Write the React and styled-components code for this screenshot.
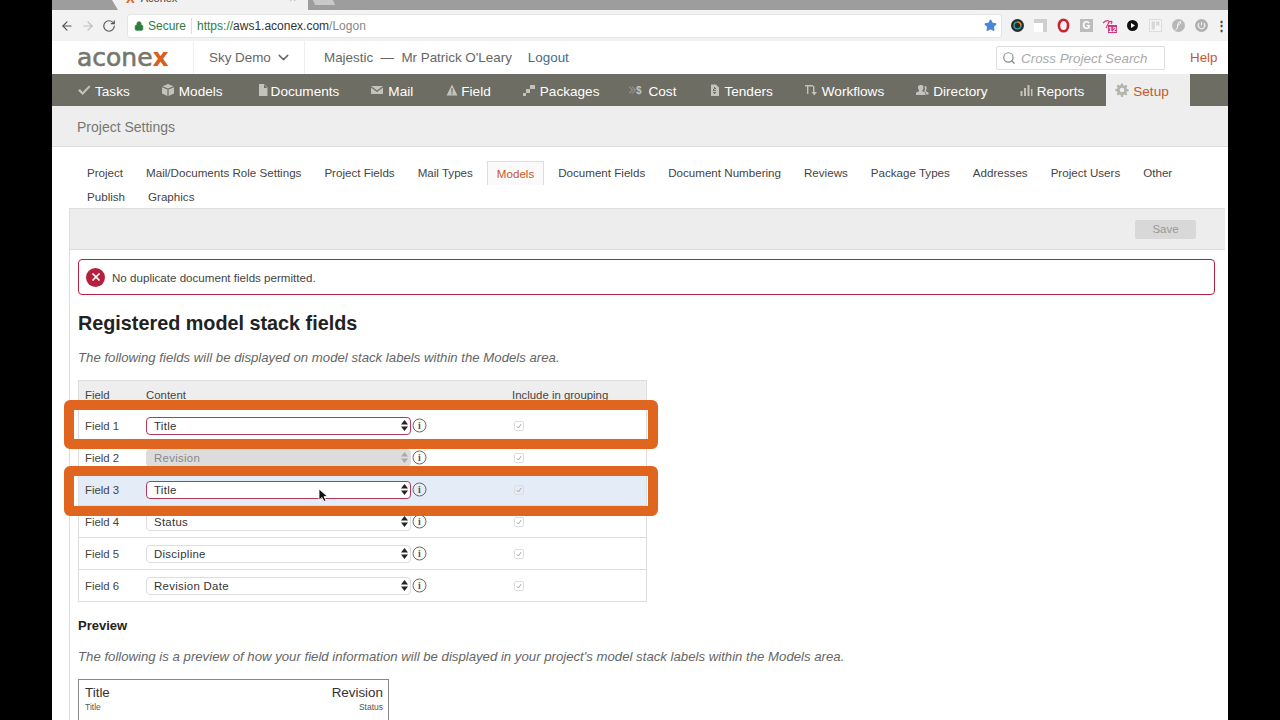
import React from 'react';
import styled, { createGlobalStyle } from 'styled-components';
import { ArrowLeft, ArrowRight, RotateCw, Lock, Star, ChevronDown, Search, X } from 'lucide-react';

const Global = createGlobalStyle`
  html, body { margin: 0; padding: 0; background: #000; }
  body { font-family: "Liberation Sans", Arial, sans-serif; overflow: hidden; }
`;

const Screen = styled.div`
  position: relative; width: 1176px; height: 720px; margin: 0 52px; background: #fff; overflow: hidden;
`;
const TabStrip = styled.div`
  height: 10px; background: #9d9d9d; position: relative;
`;
const BrowserTab = styled.div`
  position: absolute; left: 60px; top: 0; width: 196px; height: 10px; background: #f1f1f1; overflow: hidden;
  clip-path: polygon(0 0, 100% 0, 100% 100%, 6px 100%); font-size: 11px; color: #444;
  display: flex; justify-content: space-between; padding: 0 12px 0 14px; box-sizing: border-box;
`;
const TabLabel = styled.span`
  display: flex; gap: 6px; margin-top: -8px; line-height: 13px;
  b { color: #d8601c; font-size: 13px; }
`;
const TabClose = styled.span` margin-top: -8px; color: #777; line-height: 13px; `;
const NewTab = styled.div`
  position: absolute; left: 262px; top: 0; width: 20px; height: 5px; background: #c9c9c9; transform: skewX(25deg);
`;
const Toolbar = styled.div`
  height: 31px; background: #f2f2f2; display: flex; align-items: center; padding-left: 8px; color: #555;
`;
const NavIcons = styled.div`
  display: flex; gap: 7px; align-items: center; width: 67px; flex: none;
  svg { width: 14px; height: 14px; }
`;
const Omnibox = styled.div`
  width: 875px; height: 24px; background: #fff; border: 1px solid #e4e4e4; border-radius: 3px; flex: none;
  display: flex; align-items: center; box-sizing: border-box; padding: 0 4px 0 6px; font-size: 12px;
`;
const Secure = styled.span`
  color: #2f7d3c; display: flex; gap: 4px; align-items: center; padding-right: 5px; border-right: 1px solid #ddd; height: 16px; margin-right: 5px;
`;
const UrlGreen = styled.span` color: #2f7d3c; `;
const UrlDark = styled.span` color: #333; `;
const UrlGrey = styled.span` color: #888; `;
const UrlFill = styled.span` flex: 1; `;
const Extensions = styled.div`
  display: flex; align-items: center; gap: 8px; padding-left: 8px;
`;
const ExtSvg = styled.svg` width: 15px; height: 15px; flex: none; display: block; `;
const Dots = styled.span` color: #444; font-size: 13px; font-weight: 700; line-height: 13px; margin-left: -2px; `;

const Header = styled.div`
  height: 33px; background: #fff; display: flex; align-items: stretch; font-size: 13.4px; color: #666;
`;
const Logo = styled.div`
  width: 141px; flex: none; box-sizing: border-box; padding-left: 25px; color: #77766d; line-height: 33px;
  font-family: "DejaVu Sans", sans-serif; font-size: 25px; -webkit-text-stroke: .6px #77766d;
  span { color: #d8601c; font-weight: 700; -webkit-text-stroke: 0; }
`;
const Crumb = styled.div`
  display: flex; align-items: center; gap: 4px; border-left: 1px solid #eee; border-right: 1px solid #eee; width: 112px; flex: none;
  box-sizing: border-box; padding-left: 15px;
`;
const UserInfo = styled.div`
  display: flex; align-items: center; padding-left: 19px; width: 691px; box-sizing: border-box; flex: none; white-space: pre;
`;
const LogoutLink = styled.a` color: #3d6c92; margin-left: 16px; `;
const SearchBox = styled.div`
  width: 169px; height: 24px; margin-top: 5px; border: 1px solid #ddd; border-radius: 2px; box-sizing: border-box; display: flex; align-items: center;
  gap: 5px; padding-left: 5px; color: #aaa; font-style: italic; font-size: 13.4px; flex: none;
  svg { color: #888; }
`;
const Help = styled.a` color: #c8572a; margin-left: 25px; line-height: 33px; `;

const MainNav = styled.div`
  height: 32px; background: #6e6d63; display: flex; align-items: stretch; padding-left: 25px; font-size: 13.6px; color: #fff; box-sizing: border-box;
`;
const NavItem = styled.div`
  display: flex; align-items: center; gap: ${p => p.$gap}px; margin-right: ${p => p.$mr}px; white-space: nowrap; padding-top: 2px;
  svg { margin-top: -3px; }
`;
const NavGlyph = styled.svg`
  width: 14px; height: 14px; flex: none; fill: #c4c3bb; stroke: none;
`;
const SetupItem = styled.div`
  display: flex; align-items: center; gap: 4px; width: 84px; box-sizing: border-box; padding: 2px 0 0 9px; background: #eee; color: #c8572a;
  svg { fill: #b5b5b0; margin-top: -3px; }
`;
const SubHeader = styled.div`
  height: 40px; background: #eeeeee; border-bottom: 1px solid #ddd; font-size: 14px; color: #77776f; line-height: 42px; padding-left: 25px;
`;
const Tabs = styled.div`
  height: 61px; box-sizing: border-box; padding: 14px 0 0 35px; display: flex; flex-wrap: wrap; align-content: flex-start; font-size: 11.6px; color: #444;
`;
const TabItem = styled.div`
  height: 24px; line-height: 24px; padding: 0 ${p => p.$active ? '9px' : '0'}; margin-right: ${p => p.$active ? '14px' : '23px'}; margin-left: ${p => p.$active ? '-9px' : '0'};
  color: ${p => p.$active ? '#c8572a' : '#444'}; white-space: nowrap; box-sizing: border-box;
  ${p => p.$active ? 'border: 1px solid #ddd; border-bottom: none; background: #fafafa; line-height: 23px;' : ''}
`;
const Panel = styled.div`
  margin: 0 3px 0 17px; border-left: 1px solid #ddd; border-top: 1px solid #ddd;
`;
const SaveBar = styled.div`
  height: 41px; box-sizing: border-box; background: #ededed; border-bottom: 1px solid #ddd; display: flex; justify-content: flex-end; align-items: center; padding-right: 29px;
`;
const SaveBtn = styled.div`
  width: 61px; height: 19px; background: #d8d8d8; border-radius: 2px; color: #999; font-size: 11.5px; text-align: center; line-height: 19px;
`;
const PanelBody = styled.div` padding: 9px 10px 0 8px; `;
const ErrorBox = styled.div`
  height: 36px; border: 1px solid #b3213f; border-radius: 4px; display: flex; align-items: center; box-sizing: border-box; padding-left: 7px; gap: 7px;
  font-size: 11.6px; color: #444;
`;
const ErrorIcon = styled.span`
  width: 19px; height: 19px; border-radius: 50%; background: #b3213f; color: #fff; display: flex; align-items: center; justify-content: center;
`;
const Title = styled.h1`
  font-size: 19.8px; font-weight: 700; color: #222; margin: 16px 0 0; line-height: 24px;
`;
const Intro = styled.p`
  font-size: 13.2px; font-style: italic; color: #666; margin: ${p => p.$mt}px 0 0; line-height: 16px;
`;
const Table = styled.div`
  margin-top: 14px; width: 569px; border: 1px solid #ddd; box-sizing: border-box;
`;
const THead = styled.div`
  height: 28px; background: #eee; display: grid; grid-template-columns: 61px 366px 1fr; font-size: 11.4px; color: #444; line-height: 28px; padding-left: 6px;
`;
const Row = styled.div`
  height: 32px; display: grid; grid-template-columns: 61px 266px 102px 1fr; align-items: center; padding-left: 6px; font-size: 11.4px; color: #444;
  border-top: 1px solid #ddd; box-sizing: border-box; background: ${p => p.$hl ? '#e3ecf7' : '#fff'};
`;
const Select = styled.div`
  width: 265px; height: 18px; box-sizing: border-box; border: 1px solid ${p => p.$err ? '#b3395a' : '#ddd'}; border-radius: 4px;
  background: ${p => p.$off ? '#dcdcdc' : '#fff'}; color: ${p => p.$off ? '#888' : '#333'}; font-size: 11.4px; letter-spacing: .3px; line-height: 16px; padding: 0 2px 0 7px;
  display: flex; justify-content: space-between; align-items: center;
`;
const Arrows = styled.svg`
  width: 7px; height: 11px; fill: ${p => p.$off ? '#aaa' : '#222'};
`;
const InfoIcon = styled.svg`
  width: 15px; height: 15px; display: block; stroke: #666; fill: none;
`;
const InfoGlyph = styled.text`
  font-family: "Liberation Serif", serif; font-size: 10px; fill: #555; stroke: none; font-weight: 700;
`;
const CheckBox = styled.svg`
  width: 10px; height: 10px; display: block; fill: none;
`;
const PreviewTitle = styled.h2`
  font-size: 13px; font-weight: 700; color: #222; margin: 16px 0 0; line-height: 16px;
`;
const Card = styled.div`
  margin-top: 14px; width: 311px; height: 60px; border: 1px solid #888; box-sizing: border-box; padding: 5px 5px 0 6px; display: grid;
  grid-template-columns: 1fr 1fr; color: #333; align-content: start;
`;
const CardBig = styled.div` font-size: 13.4px; line-height: 15px; text-align: ${p => p.$r ? 'right' : 'left'}; `;
const CardSmall = styled.div` font-size: 8.5px; line-height: 11px; margin-top: 2px; color: #555; text-align: ${p => p.$r ? 'right' : 'left'}; `;
const Highlight = styled.div`
  position: absolute; left: 12px; width: 594px; top: ${p => p.$top}px; height: ${p => p.$h}px; border: 10px solid #e0651f;
  box-sizing: border-box; border-radius: 6px; pointer-events: none;
`;
const Cursor = styled.svg`
  position: absolute; left: 266px; top: 488px;
`;

const icons = {
  Tasks: <path d="M1 7.5 3 6l2.6 3L12 2.5l1.5 1.2L5.7 12z" />,
  Models: <path d="M7 1 1.5 3.2 7 5.4l5.5-2.2zM1 4.2v6.4L6.4 13V6.4zM13 4.2v6.4L7.6 13V6.4z" />,
  Documents: <path d="M3 1h5l3.5 3.5V13H3zM8 1.5V5h3.2z" />,
  Mail: <path d="M1 3h12L7 7.5zM1 4.5V11h12V4.5L7 9z" />,
  Field: <path d="M7 1.5 12.5 12.5h-11zM6.4 5v4.5h1.2V5zM6.4 10.2v1.2h1.2v-1.2z" fillRule="evenodd" />,
  Packages: <path d="M8 2h5v4H8zM4 6h4v4H4zM1 10h3v3H1z" />,
  Tenders: <path d="M3 1.5h5l3 3V13H3zM6 5v1H5v2h3v1H5v1h1v1h1v-1h1V7H6V6h2V5H7V4H6z" fillRule="evenodd" />,
  Workflows: <path d="M1 2h8v1.4H4.4V11H3V3.4H1zM9 3h1.4v6H13l-2.8 3.5L7.5 9H9z" />,
  Directory: <path d="M6 2a2.4 2.4 0 0 1 2.4 2.8c0 1-.5 2-1 2.4v1l3 1.4V12H1v-2.4l3-1.4v-1c-.5-.4-1-1.4-1-2.4A2.4 2.4 0 0 1 6 2zM9.6 3a2 2 0 0 1 2 2.4c0 .8-.4 1.7-.8 2v.8L13.5 9.6V11.5h-2.4V9.4L9 8.2c.5-.7.9-1.8.9-3z" />,
  Reports: <path d="M1.5 8h2v5h-2zM5 5h2v8H5zM8.5 2h2v11h-2zM12 6h1.5v7H12z" />,
};
const nav = [
  ['Tasks', 4, 31], ['Models', 4, 33], ['Documents', 1, 31], ['Mail', 4, 32], ['Field', 2, 31],
  ['Packages', 4, 30], ['Cost', 5, 32], ['Tenders', 2, 31], ['Workflows', 4, 31], ['Directory', 4, 31], ['Reports', 4, 22],
];
const tabs = ['Project', 'Mail/Documents Role Settings', 'Project Fields', 'Mail Types', 'Models', 'Document Fields', 'Document Numbering', 'Reviews', 'Package Types', 'Addresses', 'Project Users', 'Other', 'Publish', 'Graphics'];
const rows = [
  ['Field 1', 'Title', { err: 1 }], ['Field 2', 'Revision', { off: 1 }], ['Field 3', 'Title', { err: 1, hl: 1 }],
  ['Field 4', 'Status', {}], ['Field 5', 'Discipline', {}], ['Field 6', 'Revision Date', {}],
];
const GEAR = 'M6 0.5h2l.3 1.8 1.2.5 1.5-1 1.4 1.4-1 1.5.5 1.2 1.8.3v2l-1.8.3-.5 1.2 1 1.5-1.4 1.4-1.5-1-1.2.5-.3 1.8H6l-.3-1.8-1.2-.5-1.5 1-1.4-1.4 1-1.5-.5-1.2L.3 8V6l1.8-.3.5-1.2-1-1.5L3 1.6l1.5 1 1.2-.5zM7 4.7a2.3 2.3 0 1 0 0 4.6 2.3 2.3 0 0 0 0-4.6z';

const exts = [
  <><circle cx="7.5" cy="7.5" r="6.5" fill="#2b2b2b" /><circle cx="7.5" cy="7.5" r="3.4" fill="none" stroke="#3aa0a0" strokeWidth="1.4" /><path d="M7.5 4.1a3.4 3.4 0 0 1 3.4 3.4" stroke="#d9882c" strokeWidth="1.4" fill="none" /></>,
  <><path d="M1 1h13v13H1z" fill="#fff" /><path d="M1 1h13v4H1zM10 1h4v13h-4z" fill="#cfcfcf" /></>,
  <ellipse cx="7.5" cy="7.5" rx="4.6" ry="5.8" fill="none" stroke="#c8242f" strokeWidth="2.6" />,
  <><rect x="1" y="1" width="13" height="13" fill="#bcbcbc" /><text x="7.5" y="11" textAnchor="middle" fontSize="10" fontWeight="700" fill="#fff" fontFamily="Liberation Sans">G</text></>,
  <><path d="M1 5c3-3 6-3 6-1l-3 6M6 5c2-2 4-2 4-1l-1 2" fill="none" stroke="#d4357f" strokeWidth="1.1" /><rect x="6" y="7" width="9" height="8" fill="#d4357f" /><text x="10.5" y="14" textAnchor="middle" fontSize="7" fontWeight="700" fill="#fff" fontFamily="Liberation Sans">12</text></>,
  <><circle cx="7.5" cy="7.5" r="5.5" fill="#111" /><path d="M6 5l4 2.5L6 10z" fill="#fff" /></>,
  <><rect x="1.5" y="1.5" width="12" height="12" fill="#f5f5f5" stroke="#dcdcdc" /><path d="M3.5 3.5h3.5v8H3.5zM8 3.5h3.5v4H8z" fill="#d8d8d8" /></>,
  <><circle cx="7.5" cy="7.5" r="6.5" fill="#b8b8b8" /><path d="M9.5 3.5c-2 0-3 3-3 5s-1 3-2 3M9.5 3.5c1 1-.5 3-3 4" fill="none" stroke="#fff" strokeWidth="1" /></>,
  <><circle cx="7.5" cy="7.5" r="6.5" fill="#b0b0b0" /><path d="M7.5 4v3.5M5.2 5.2a3.2 3.2 0 1 0 4.6 0" fill="none" stroke="#f2f2f2" strokeWidth="1.1" /></>,
];

export default function App() {
  return (
    <Screen>
      <Global />
      <TabStrip>
        <BrowserTab><TabLabel><b>X</b>Aconex</TabLabel><TabClose>×</TabClose></BrowserTab>
        <NewTab />
      </TabStrip>
      <Toolbar>
        <NavIcons><ArrowLeft /><ArrowRight color="#bbb" /><RotateCw /></NavIcons>
        <Omnibox>
          <Secure><Lock size={10} fill="#2f7d3c" />Secure</Secure>
          <UrlGreen>https://</UrlGreen><UrlDark>aws1.aconex.com</UrlDark><UrlGrey>/Logon</UrlGrey>
          <UrlFill />
          <Star size={13} fill="#4a86d8" color="#4a86d8" />
        </Omnibox>
        <Extensions>
          {exts.map((e, i) => <ExtSvg key={i} viewBox="0 0 15 15">{e}</ExtSvg>)}
          <Dots>⋮</Dots>
        </Extensions>
      </Toolbar>
      <Header>
        <Logo>acone<span>x</span></Logo>
        <Crumb>Sky Demo <ChevronDown size={17} /></Crumb>
        <UserInfo>Majestic  —  Mr Patrick O'Leary<LogoutLink>Logout</LogoutLink></UserInfo>
        <SearchBox><Search size={14} />Cross Project Search</SearchBox>
        <Help>Help</Help>
      </Header>
      <MainNav>
        {nav.map(([t, gap, mr]) => (
          <NavItem key={t} $gap={gap} $mr={mr}>
            {t === 'Cost'
              ? <NavGlyph viewBox="0 0 14 14"><path d="M0 3.5 3.5 7 0 10.5M3 3.5 6.5 7 3 10.5" fill="none" stroke="#a9a89f" strokeWidth="1" /><text x="7" y="11" fontSize="10" fontWeight="700" fontFamily="Liberation Sans">$</text></NavGlyph>
              : <NavGlyph viewBox="0 0 14 14">{icons[t]}</NavGlyph>}
            {t}
          </NavItem>
        ))}
        <SetupItem><NavGlyph viewBox="0 0 14 14"><path d={GEAR} fillRule="evenodd" /></NavGlyph>Setup</SetupItem>
      </MainNav>
      <SubHeader>Project Settings</SubHeader>
      <Tabs>{tabs.map(t => <TabItem key={t} $active={t === 'Models'}>{t}</TabItem>)}</Tabs>
      <Panel>
        <SaveBar><SaveBtn>Save</SaveBtn></SaveBar>
        <PanelBody>
          <ErrorBox><ErrorIcon><X size={12} strokeWidth={3.5} /></ErrorIcon>No duplicate document fields permitted.</ErrorBox>
          <Title>Registered model stack fields</Title>
          <Intro $mt={15}>The following fields will be displayed on model stack labels within the Models area.</Intro>
          <Table>
            <THead><span>Field</span><span>Content</span><span>Include in grouping</span></THead>
            {rows.map(([f, v, o]) => (
              <Row key={f} $hl={o.hl}>
                <span>{f}</span>
                <Select $err={o.err} $off={o.off}>{v}
                  <Arrows $off={o.off} viewBox="0 0 7 11"><path d="M3.5 0 7 4.5H0zM3.5 11 0 6.5h7z" /></Arrows>
                </Select>
                <InfoIcon viewBox="0 0 15 15"><circle cx="7.5" cy="7.5" r="6.5" /><InfoGlyph x="7.5" y="11" textAnchor="middle">i</InfoGlyph></InfoIcon>
                <CheckBox viewBox="0 0 10 10"><rect x=".5" y=".5" width="9" height="9" rx="1.5" stroke="#ddd" /><path d="M2.8 5.2 4.4 7l2.8-4" stroke="#aaa" /></CheckBox>
              </Row>
            ))}
          </Table>
          <PreviewTitle>Preview</PreviewTitle>
          <Intro $mt={15}>The following is a preview of how your field information will be displayed in your project's model stack labels within the Models area.</Intro>
          <Card>
            <div><CardBig>Title</CardBig><CardSmall>Title</CardSmall></div>
            <div><CardBig $r>Revision</CardBig><CardSmall $r>Status</CardSmall></div>
          </Card>
        </PanelBody>
      </Panel>
      <Highlight $top={400} $h={49} />
      <Highlight $top={466} $h={50} />
      <Cursor width="10" height="15" viewBox="0 0 10 15"><path d="M1 1v11l3-2.5 2 4 2-1-2-4h3.5z" fill="#111" stroke="#fff" strokeWidth=".8" /></Cursor>
    </Screen>
  );
}
